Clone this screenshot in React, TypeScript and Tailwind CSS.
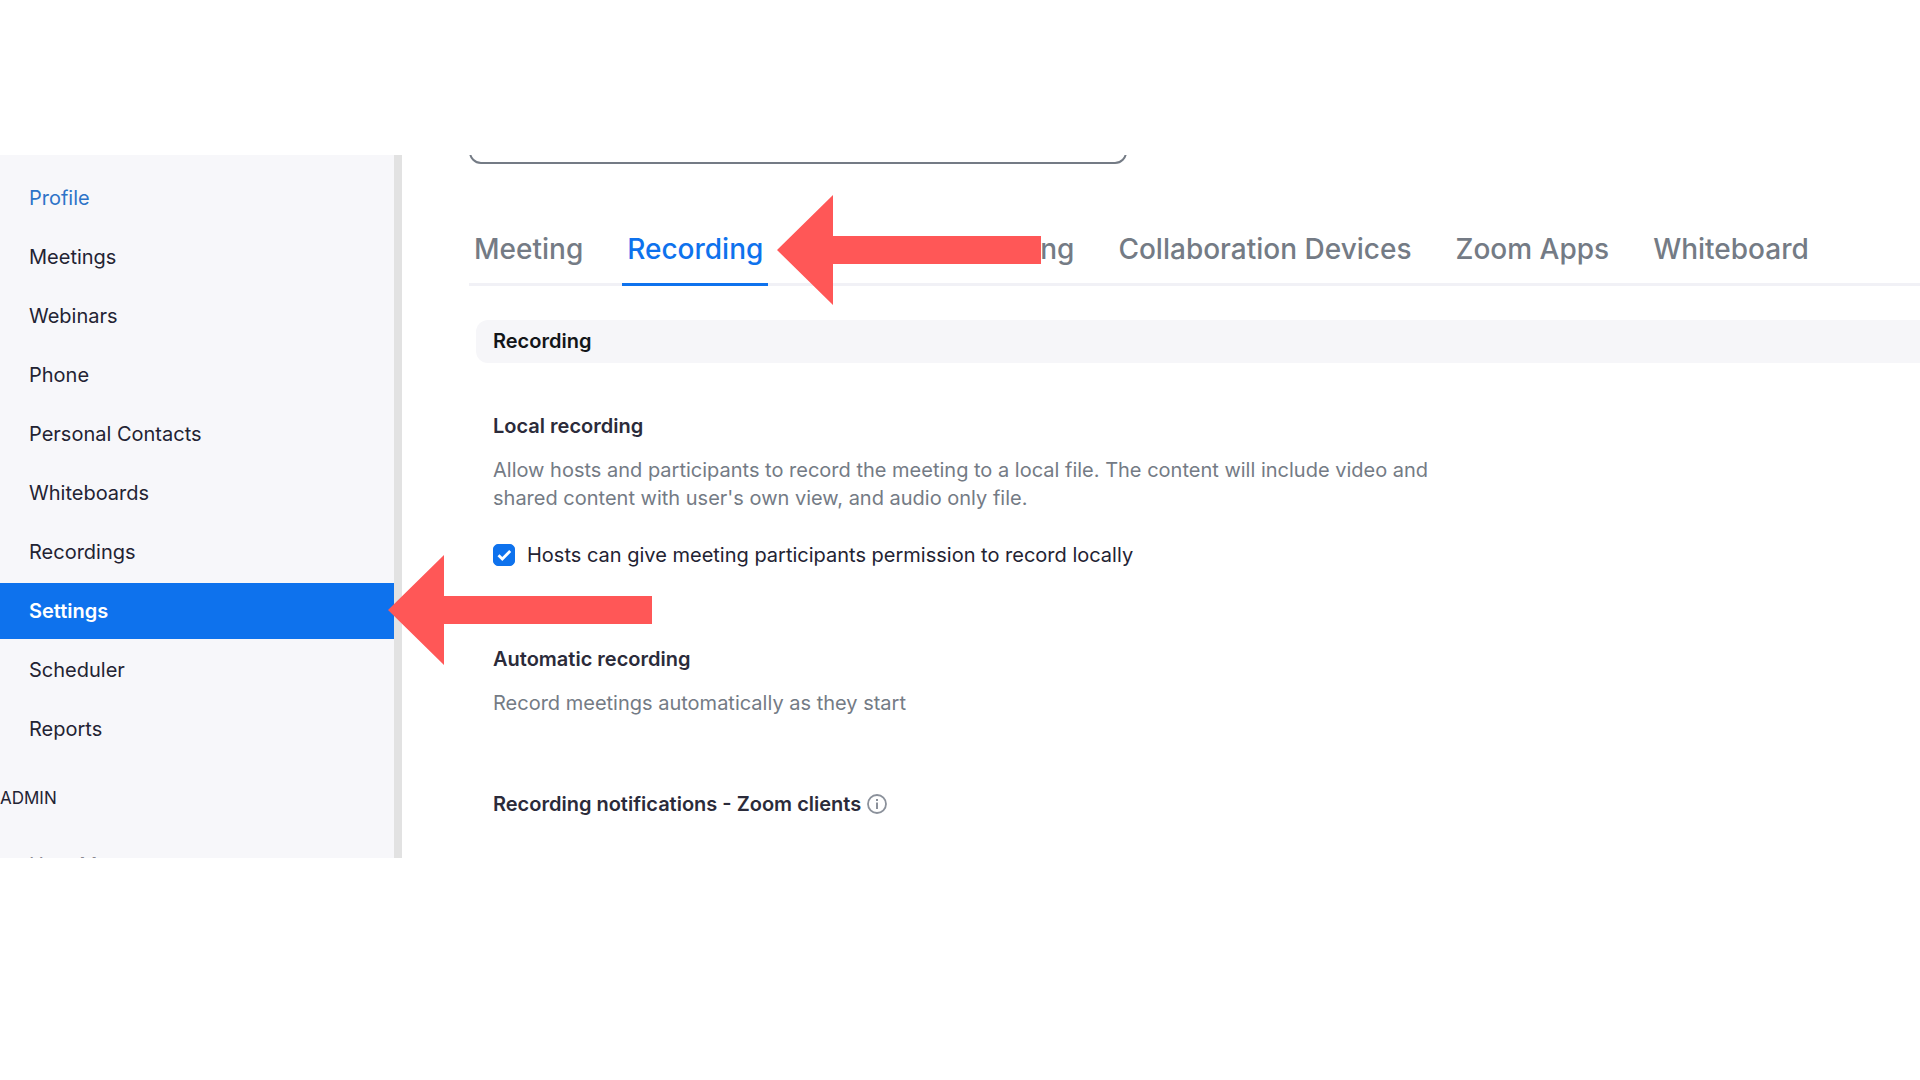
import { useState } from "react";

const personalLinks = [
  "Profile",
  "Meetings",
  "Webinars",
  "Phone",
  "Personal Contacts",
  "Whiteboards",
  "Recordings",
  "Settings",
  "Scheduler",
  "Reports",
];

const tabs = [
  "Meeting",
  "Recording",
  "Audio Conferencing",
  "Collaboration Devices",
  "Zoom Apps",
  "Whiteboard",
];

function linkStyle(name: string) {
  if (name === "Settings") return "bg-[#0e72ed] font-semibold text-white";
  if (name === "Profile") return "text-[#2d73c8]";
  return "text-[#232333]";
}

function Arrow({ className }: { className: string }) {
  return (
    <svg
      className={className}
      width="264"
      height="110"
      viewBox="0 0 264 110"
      fill="#ff5757"
      aria-hidden="true"
    >
      <path d="M0 55 56 0V41H264V69H56V110Z" />
    </svg>
  );
}

function InfoIcon() {
  return (
    <svg width="20" height="20" viewBox="0 0 20 20" fill="none" stroke="#8b919b" aria-hidden="true">
      <circle cx="10" cy="10" r="9" strokeWidth="1.8" />
      <path d="M10 8.4V15" strokeWidth="2" />
      <path d="M10 5V7" strokeWidth="2" />
    </svg>
  );
}

function Sidebar() {
  return (
    <aside className="relative w-[402px] shrink-0 border-r-8 border-[#e2e2e2] bg-[#f7f7fa] text-[20px]">
      <nav aria-label="Account">
        <ul className="flex flex-col gap-[3px] pt-[15px]">
          {personalLinks.map((name) => (
            <li key={name}>
              <a
                href="#"
                aria-current={name === "Settings" ? "page" : undefined}
                className={`flex h-14 items-center pl-[29px] ${linkStyle(name)}`}
              >
                {name}
              </a>
            </li>
          ))}
        </ul>
        <h2 className="mt-[29px] text-[17px] leading-6 text-[#232333]">ADMIN</h2>
        <div className="mt-[46px] h-[2px] overflow-hidden">
          <a href="#" className="block pl-[29px] leading-[18px] text-[#8a8a92]">
            User M
          </a>
        </div>
      </nav>
      <Arrow className="absolute left-[388px] top-[400px] z-10" />
    </aside>
  );
}

function Tabs() {
  return (
    <div role="tablist" className="relative ml-[67px] mt-[53px] flex gap-[34px] border-b-[3px] border-[#f1f1f6] text-[28px] font-medium">
      {tabs.map((name) => (
        <button
          key={name}
          type="button"
          role="tab"
          aria-selected={name === "Recording"}
          className={`-mb-[3px] whitespace-nowrap border-b-[3px] px-[5px] pb-4 pt-[14px] leading-9 ${
            name === "Recording"
              ? "border-[#0e72ed] text-[#0e72ed]"
              : "border-transparent text-[#747b85]"
          }`}
        >
          {name}
        </button>
      ))}
      <Arrow className="absolute left-[308px] top-[-22px]" />
    </div>
  );
}

function Setting({ title, text, info }: { title: string; text?: string; info?: boolean }) {
  return (
    <>
      <h3 className="flex items-center gap-[6px] text-[20px] font-semibold leading-7 text-[#2b2b3a]">
        {title}
        {info && (
          <button type="button" aria-label="More information">
            <InfoIcon />
          </button>
        )}
      </h3>
      {text && <p className="mt-4 max-w-[980px] text-[20px] leading-7 text-[#747b85]">{text}</p>}
    </>
  );
}

export default function App() {
  const [permitted, setPermitted] = useState(true);

  return (
    <div className="min-h-screen overflow-hidden bg-white py-[155px] font-['Inter',sans-serif]">
      <div className="flex items-stretch">
        <Sidebar />
        <main className="min-w-0 flex-1">
          <div className="ml-[67px] flex h-[9px] items-end overflow-hidden">
            <input
              type="search"
              aria-label="Search settings"
              className="h-12 w-[658px] shrink-0 rounded-xl border-2 border-[#747b85] bg-white px-4"
            />
          </div>
          <Tabs />
          <h2 className="ml-[74px] mt-[34px] rounded-l-xl bg-[#f6f6f9] pb-2 pl-[17px] pt-[7px] text-[20px] font-semibold leading-7 text-[#131619]">
            Recording
          </h2>
          <div className="ml-[91px]">
            <section className="pt-[49px]">
              <Setting
                title="Local recording"
                text="Allow hosts and participants to record the meeting to a local file. The content will include video and shared content with user's own view, and audio only file."
              />
              <label className="mt-[29px] flex items-center gap-3 text-[20px] leading-7 text-[#232333]">
                <span className="relative flex size-[22px]">
                  <input
                    type="checkbox"
                    checked={permitted}
                    onChange={(e) => setPermitted(e.target.checked)}
                    className="peer size-[22px] appearance-none rounded-[5px] border border-[#747b85] checked:border-[#0e72ed] checked:bg-[#0e72ed]"
                  />
                  <svg
                    className="pointer-events-none absolute inset-0 hidden peer-checked:block"
                    width="22"
                    height="22"
                    viewBox="0 0 22 22"
                    fill="none"
                    stroke="#fff"
                    strokeWidth="2.8"
                    aria-hidden="true"
                  >
                    <path d="M5.5 11.2 9.3 15 17.2 7" />
                  </svg>
                </span>
                Hosts can give meeting participants permission to record locally
              </label>
            </section>
            <section className="mt-[76px]">
              <Setting title="Automatic recording" text="Record meetings automatically as they start" />
            </section>
            <section className="mt-[73px]">
              <Setting title="Recording notifications - Zoom clients" info />
            </section>
          </div>
        </main>
      </div>
    </div>
  );
}
